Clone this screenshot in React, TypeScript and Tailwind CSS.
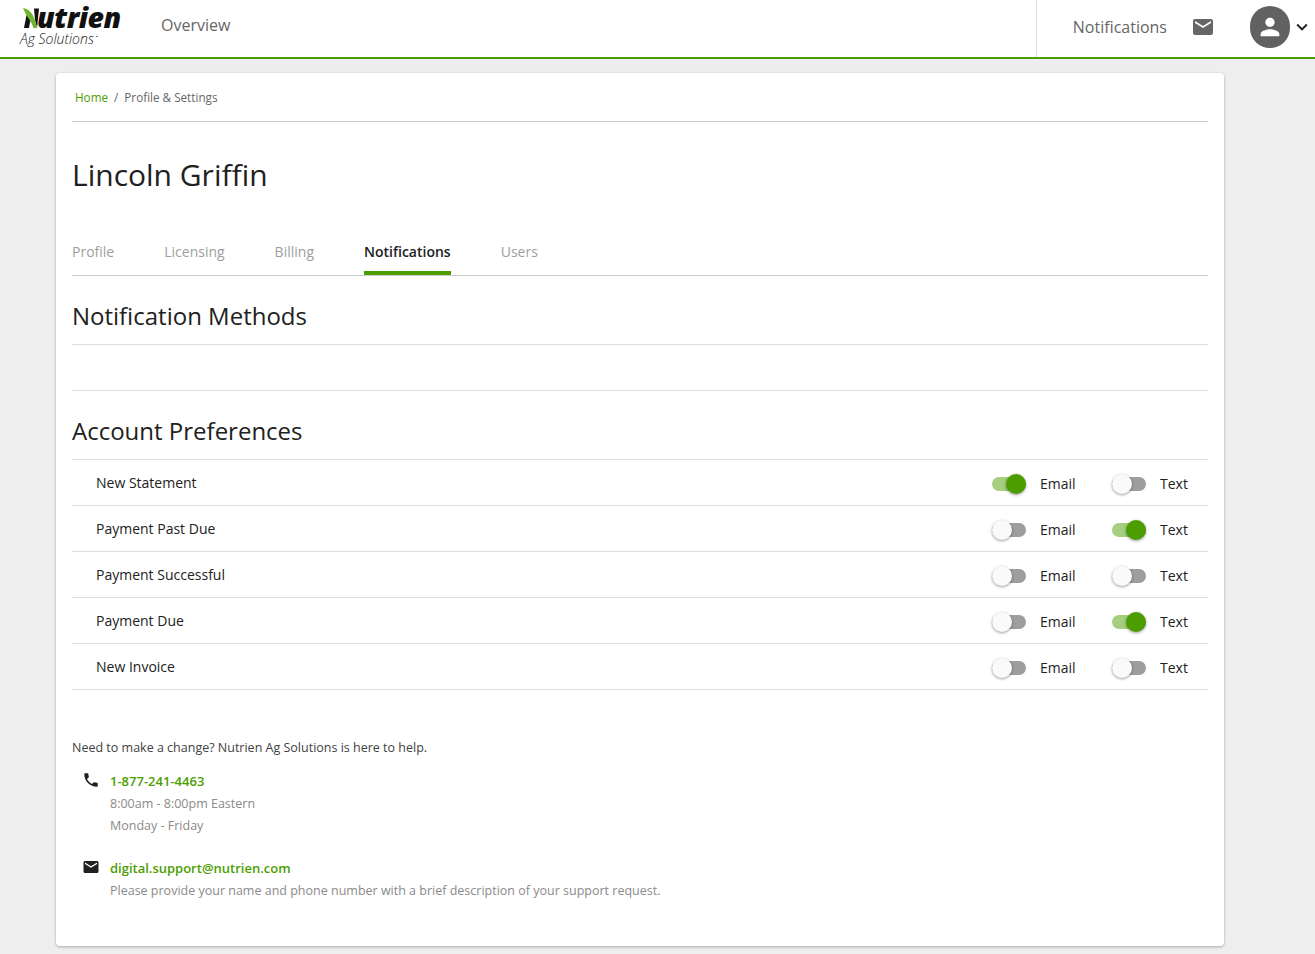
import React from 'react';

const GREEN = '#4c9e00';

const MailIcon: React.FC<{ className?: string }> = ({ className }) => (
  <svg viewBox="0 0 24 24" className={className} fill="currentColor">
    <path d="M20 4H4c-1.1 0-1.99.9-1.99 2L2 18c0 1.1.9 2 2 2h16c1.1 0 2-.9 2-2V6c0-1.1-.9-2-2-2zm0 4l-8 5-8-5V6l8 5 8-5v2z" />
  </svg>
);

const PhoneIcon: React.FC<{ className?: string }> = ({ className }) => (
  <svg viewBox="0 0 24 24" className={className} fill="currentColor">
    <path d="M6.62 10.79c1.44 2.83 3.76 5.14 6.59 6.59l2.2-2.2c.27-.27.67-.36 1.02-.24 1.12.37 2.33.57 3.57.57.55 0 1 .45 1 1V20c0 .55-.45 1-1 1-9.39 0-17-7.61-17-17 0-.55.45-1 1-1h3.5c.55 0 1 .45 1 1 0 1.25.2 2.45.57 3.57.11.35.03.74-.25 1.02l-2.2 2.2z" />
  </svg>
);

const Toggle: React.FC<{ on: boolean }> = ({ on }) => (
  <div className="relative h-[14px] w-[34px] rounded-full" style={{ backgroundColor: on ? '#a5ce7f' : '#9e9e9e' }}>
    <div
      className="absolute top-[-3px] h-5 w-5 rounded-full shadow-[0_1px_3px_rgba(0,0,0,0.4)]"
      style={{ left: on ? 14 : 0, backgroundColor: on ? GREEN : '#fafafa' }}
    />
  </div>
);

const prefs = [
  { name: 'New Statement', email: true, text: false },
  { name: 'Payment Past Due', email: false, text: true },
  { name: 'Payment Successful', email: false, text: false },
  { name: 'Payment Due', email: false, text: true },
  { name: 'New Invoice', email: false, text: false },
];

const tabs = ['Profile', 'Licensing', 'Billing', 'Notifications', 'Users'];

const Logo: React.FC = () => (
  <div className="relative ml-5 h-[57px] w-[110px]">
    <svg viewBox="0 0 18 22" className="absolute left-[2px] top-[7px] h-[22px] w-[18px]">
      <path d="M2 21L4.5 8L8.5 12.5L7 21Z" fill="#111" />
      <path d="M12 1.5H17L15 21L13 13Z" fill="#111" />
      <path d="M1 1C7 2 12 6 15 21H11.5C9.5 14 4 9 1 1Z" fill="#6cb52d" />
    </svg>
    <span className="absolute left-[17px] top-[4px] text-[28.5px] leading-[26px] font-extrabold italic tracking-[-0.5px] text-[#111]">
      utrien
    </span>
    <span className="absolute left-0 top-[30px] text-[14px] leading-[18px] font-light italic text-[#222]">
      Ag Solutions
    </span>
    <span className="absolute left-[76px] top-[36px] h-px w-[2px] bg-[#777]" />
  </div>
);

export default function App() {
  return (
    <div className="min-h-[954px] bg-[#eeeeee] pb-2 [font-family:'Open_Sans',sans-serif] text-[#212121]">
      <header className="flex h-[59px] items-stretch border-b-2 border-[#4c9e00] bg-white">
        <Logo />
        <div className="ml-[31px] flex items-center pb-[8px] text-base text-[#666666]">Overview</div>
        <div className="ml-auto flex items-center border-l border-[#dddddd] pb-1 pl-9">
          <span className="text-base text-[#666666]">Notifications</span>
          <MailIcon className="ml-[24px] h-6 w-6 text-[#666666]" />
          <div className="ml-[35px] flex h-[42px] w-[40px] items-center justify-center rounded-full bg-[#616161] text-white">
            <svg viewBox="0 0 24 24" className="h-7 w-7" fill="currentColor">
              <path d="M12 12c2.21 0 4-1.79 4-4s-1.79-4-4-4-4 1.79-4 4 1.79 4 4 4zm0 2c-2.67 0-8 1.34-8 4v2h16v-2c0-2.66-5.33-4-8-4z" />
            </svg>
          </div>
          <svg viewBox="0 0 24 24" className="ml-[1px] mr-[2px] h-[22px] w-[22px] text-[#212121]" fill="currentColor">
            <path d="M7.41 8.59L12 13.17l4.59-4.58L18 10l-6 6-6-6 1.41-1.41z" />
          </svg>
        </div>
      </header>

      <main className="ml-[56px] mr-[91px] mt-[14px] rounded bg-white px-4 pb-[44px] shadow-[0_1px_3px_rgba(0,0,0,0.3)]">
        <div className="flex h-[49px] items-center border-b border-[#cccccc] pl-[3px] pt-[2px] text-[11.7px]">
          <span className="text-[#4c9e00]">Home</span>
          <span className="mx-[6px] text-[#666666]">/</span>
          <span className="text-[#666666]">Profile &amp; Settings</span>
        </div>

        <h1 className="mt-[31px] text-[30px] leading-[44px] text-[#212121]">Lincoln Griffin</h1>

        <nav className="mt-[25px] flex h-[54px] gap-[50px] border-b border-[#cccccc] text-sm leading-5">
          {tabs.map((t) => (
            <div
              key={t}
              className={
                t === 'Notifications'
                  ? 'h-[53px] border-b-4 border-[#4c9e00] pt-[20px] font-semibold text-[#212121]'
                  : 'h-[53px] pt-[20px] text-[#9e9e9e]'
              }
            >
              {t}
            </div>
          ))}
        </nav>

        <h2 className="flex h-[69px] items-center border-b border-[#dddddd] pt-[12px] text-2xl">Notification Methods</h2>
        <div className="h-[46px] border-b border-[#dddddd]" />

        <h2 className="flex h-[69px] items-center border-b border-[#dddddd] pt-[12px] text-2xl">Account Preferences</h2>
        {prefs.map((p) => (
          <div key={p.name} className="flex h-[46px] items-center border-b border-[#dddddd] pl-6 pt-[2px] text-sm">
            <span className="flex-1 pb-[2px]">{p.name}</span>
            <Toggle on={p.email} />
            <span className="ml-[14px] w-[72px]">Email</span>
            <Toggle on={p.text} />
            <span className="ml-[14px] w-[48px]">Text</span>
          </div>
        ))}

        <p className="mt-[48px] text-[12.5px] leading-5 text-[#424242]">
          Need to make a change? Nutrien Ag Solutions is here to help.
        </p>

        <div className="mt-[13px] flex pl-[10px]">
          <PhoneIcon className="h-[18px] w-[18px] text-[#212121]" />
          <div className="ml-[10px] text-[12.5px]">
            <div className="text-[13px] font-semibold leading-[20px] text-[#4c9e00]">1-877-241-4463</div>
            <div className="mt-[2px] leading-[22px] text-[#8a8a8a]">8:00am - 8:00pm Eastern</div>
            <div className="leading-[22px] text-[#8a8a8a]">Monday - Friday</div>
          </div>
        </div>

        <div className="mt-[20px] flex pl-[10px]">
          <MailIcon className="mt-[1px] h-[18px] w-[18px] text-[#212121]" />
          <div className="ml-[10px] text-[12.5px]">
            <div className="text-[13px] font-semibold leading-[22px] text-[#4c9e00]">digital.support@nutrien.com</div>
            <div className="mt-[1px] leading-[22px] text-[#8a8a8a]">
              Please provide your name and phone number with a brief description of your support request.
            </div>
          </div>
        </div>
      </main>
    </div>
  );
}
